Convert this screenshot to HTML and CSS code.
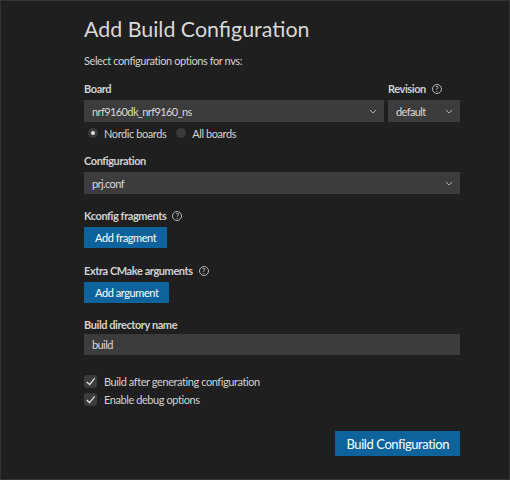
FILE: index.html
```html
<!DOCTYPE html>
<html>
<head>
<meta charset="utf-8">
<link rel="stylesheet" href="styles.css">
</head>
<body>
<div class="frame">
  <div class="panel">
    <h1 class="title">Add Build Configuration</h1>
    <p class="subtitle">Select configuration options for nvs:</p>

    <div class="row board-row">
      <div class="col grow">
        <div class="label">Board</div>
        <div class="select"><span class="val">nrf9160dk_nrf9160_ns</span><svg class="chev" viewBox="0 0 10 6"><polyline points="1,1 5,5 9,1"/></svg></div>
      </div>
      <div class="col rev">
        <div class="label">Revision <span class="help">?</span></div>
        <div class="select"><span class="val">default</span><svg class="chev" viewBox="0 0 10 6"><polyline points="1,1 5,5 9,1"/></svg></div>
      </div>
    </div>
    <div class="radios">
      <span class="radio checked"></span><span class="rlabel">Nordic boards</span>
      <span class="radio"></span><span class="rlabel">All boards</span>
    </div>

    <div class="label sec">Configuration</div>
    <div class="select"><span class="val">prj.conf</span><svg class="chev" viewBox="0 0 10 6"><polyline points="1,1 5,5 9,1"/></svg></div>

    <div class="label sec s1">Kconfig fragments <span class="help">?</span></div>
    <button class="btn">Add fragment</button>

    <div class="label sec s1b">Extra CMake arguments <span class="help">?</span></div>
    <button class="btn">Add argument</button>

    <div class="label sec s2">Build directory name</div>
    <div class="input"><span class="val">build</span></div>

    <div class="checks">
      <div class="check"><span class="box"><svg viewBox="0 0 12 12"><polyline points="2,6.5 5,9.5 10.5,2.5"/></svg></span>Build after generating configuration</div>
      <div class="check"><span class="box"><svg viewBox="0 0 12 12"><polyline points="2,6.5 5,9.5 10.5,2.5"/></svg></span>Enable debug options</div>
    </div>

    <div class="actions">
      <button class="btn big">Build Configuration</button>
    </div>
  </div>
</div>
</body>
</html>
```

FILE: styles.css
```css
html, body {
  margin: 0;
  padding: 0;
  background: #1f1f1f;
}
.frame {
  box-sizing: border-box;
  width: 510px;
  height: 480px;
  border: 1px solid #333333;
  background: #1f1f1f;
  font-family: Lato, "Noto Sans", sans-serif;
  color: #d2d2d2;
  font-size: 11px;
  letter-spacing: -0.42px;
}
.panel {
  width: 376px;
  margin-left: 83px;
  padding-top: 13px;
}
.title {
  margin: 0;
  font-size: 21.4px;
  font-weight: 400;
  line-height: 30px;
  color: #d8d8d8;
  letter-spacing: 0;
}
.subtitle {
  margin: 8px 0 0;
  line-height: 18px;
  font-size: 11px;
}
.label {
  font-weight: 700;
  font-size: 11px;
  line-height: 18px;
  display: flex;
  align-items: center;
  gap: 6px;
  margin-bottom: 2px;
}
.label.sec {
  margin-top: 11px;
}
.label.s1 { margin-top: 13px; }
.label.s1b { margin-top: 14px; }
.label.s2 { margin-top: 13px; margin-bottom: 0; }
.board-row {
  display: flex;
  gap: 4px;
  margin-top: 10px;
}
.col.grow { flex: 1; }
.col.rev { width: 72px; }
.help {
  box-sizing: border-box;
  width: 10px;
  height: 10px;
  border: 1px solid #b5b5b5;
  border-radius: 50%;
  font-size: 7px;
  line-height: 8px;
  text-align: center;
  font-weight: 700;
  color: #b5b5b5;
  letter-spacing: 0;
}
.select, .input {
  box-sizing: border-box;
  height: 22px;
  background: #3c3c3c;
  display: flex;
  align-items: center;
  justify-content: space-between;
  padding: 0 7px 0 8px;
  font-size: 11px;
  color: #d8d8d8;
}
.val { letter-spacing: -0.6px; }
.input { height: 21px; }
.chev {
  width: 8px;
  height: 5px;
  fill: none;
  stroke: #bbbbbb;
  stroke-width: 1.2;
}
.radios {
  display: flex;
  align-items: center;
  height: 16px;
  margin-top: 3px;
  padding-left: 4px;
}
.radio {
  box-sizing: border-box;
  width: 10px;
  height: 10px;
  border-radius: 50%;
  background: #3a3a3a;
  position: relative;
  margin-right: 6px;
}
.radio.checked::after {
  content: "";
  position: absolute;
  left: 3px;
  top: 3px;
  width: 4px;
  height: 4px;
  border-radius: 50%;
  background: #e0e0e0;
}
.rlabel { margin-right: 10px; }
.btn {
  font-family: Lato, "Noto Sans", sans-serif;
  background: #0e639c;
  color: #ffffff;
  border: none;
  height: 21px;
  padding: 0 11px;
  font-size: 11px;
  letter-spacing: -0.42px;
  margin: 0;
}
.checks {
  margin-top: 17px;
}
.check {
  display: flex;
  align-items: center;
  height: 18px;
}
.box {
  box-sizing: border-box;
  width: 13px;
  height: 13px;
  border-radius: 3px;
  background: #3c3c3c;
  margin-right: 7px;
  display: flex;
  align-items: center;
  justify-content: center;
}
.box svg {
  width: 11px;
  height: 11px;
  fill: none;
  stroke: #e8e8e8;
  stroke-width: 1.3;
}
.actions {
  display: flex;
  justify-content: flex-end;
  margin-top: 23px;
}
.btn.big {
  height: 25px;
  padding: 0 11px;
  font-size: 13px;
}
```
